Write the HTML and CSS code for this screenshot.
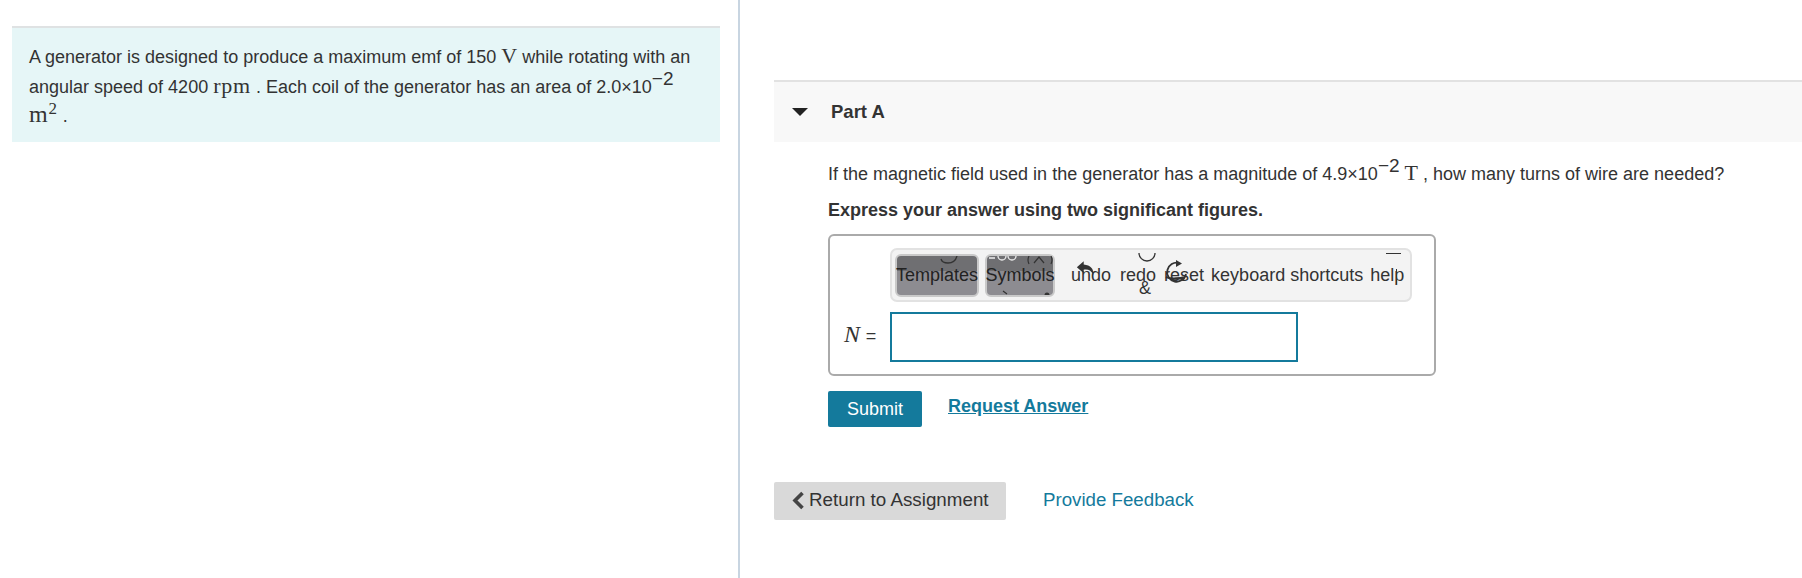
FILE: index.html
```html
<!DOCTYPE html>
<html lang="en">
<head>
<meta charset="utf-8">
<title>Part A</title>
<link rel="stylesheet" href="styles.css">
</head>
<body>
<div class="page">
  <aside class="left">
    <div class="intro">
      <p class="first">A generator is designed to produce a maximum emf of 150 <span class="math v">V</span> while rotating with an</p>
      <p>angular speed of 4200 <span class="math">rpm</span> . Each coil of the generator has an area of 2.0×10<sup class="sup">−2</sup></p>
      <p><span class="math unit">m<sup class="msup">2</sup></span> .</p>
    </div>
  </aside>
  <main class="right">
    <div class="part-head">
      <svg class="caret" width="16" height="8" viewBox="0 0 16 8"><path d="M0 0H16L8 8Z" fill="#222"/></svg>
      <span class="part-title">Part A</span>
    </div>
    <div class="part-body">
      <p class="question">If the magnetic field used in the generator has a magnitude of 4.9×10<sup class="sup">−2</sup> <span class="math v">T</span> , how many turns of wire are needed?</p>
      <p class="instruction">Express your answer using two significant figures.</p>
      <div class="answer-box">
        <div class="toolbar">
          <button class="tb-btn templates">Templates
            <svg class="frag" width="80" height="39" viewBox="0 0 80 39"><path d="M60 0q-2 7-9 7-6 0-7-4" fill="none" stroke="#333" stroke-width="1.300"/></svg>
          </button>
          <button class="tb-btn symbols">Symbols
            <svg class="frag" width="66" height="39" viewBox="0 0 66 39"><path d="M2 2h6M11 0a4 4 0 0 0 8 0M21 0a4 4 0 0 0 8 0" fill="none" stroke="#eee" stroke-width="1.300"/><path d="M42 0q-2 4 0 8M47 7l5-6 5 6M64 0q2 4 0 8M16 35l4 3" fill="none" stroke="#333" stroke-width="1.200"/><circle cx="60" cy="39" r="2.500" fill="#333"/></svg>
          </button>
          <span class="tb-item undo">undo
            <svg class="ico" width="18" height="16" viewBox="0 0 21 18"><path d="M9 1 1 8l8 7v-4c5-1 9 1 11 6 1-7-3-11-11-12z" fill="#333"/></svg>
          </span>
          <span class="tb-item redo">redo
            <svg class="glyph-arc" width="18" height="9" viewBox="0 0 18 9"><path d="M1 0a8 8 0 0 0 16 0" fill="none" stroke="#333" stroke-width="1.300"/></svg>
            <span class="amp">&amp;</span>
          </span>
          <span class="tb-item reset">reset
            <svg class="ico" width="24" height="24" viewBox="0 0 24 24"><path d="M15 3A9.500 9.500 0 1 0 22 14" fill="none" stroke="#333" stroke-width="1.800"/><path d="M12 0l6 3.500-6 3.500z" fill="#333"/><path d="M2 17q5 2 10 1.500 5 0 8-1" fill="none" stroke="#333" stroke-width="2.400"/></svg>
          </span>
          <span class="tb-item keys">keyboard shortcuts</span>
          <span class="tb-item help">help
            <span class="overline"></span>
            <span class="stem"></span>
          </span>
        </div>
        <div class="answer-row">
          <span class="label"><span class="math italic">N</span> =</span>
          <div class="input"></div>
        </div>
      </div>
      <div class="actions">
        <button class="submit">Submit</button>
        <a class="request" href="#">Request Answer</a>
      </div>
    </div>
    <div class="footer">
      <button class="return">
        <svg width="14" height="19" viewBox="0 0 14 19"><path d="M11.500 2 4 9.500l7.500 7.500" fill="none" stroke="#444" stroke-width="3.600"/></svg>
        <span>Return to Assignment</span>
      </button>
      <a class="feedback" href="#">Provide Feedback</a>
    </div>
  </main>
</div>
</body>
</html>
```
FILE: styles.css
```css
* { box-sizing: border-box; }
html, body { margin: 0; padding: 0; }
body {
  font-family: "Liberation Sans", Arial, sans-serif;
  font-size: 18px;
  color: #333;
  background: #fff;
}
p { margin: 0; }
a { text-decoration: none; color: #147a9c; }
button { font-family: inherit; font-size: 18px; }

.page { display: flex; height: 578px; overflow: hidden; }

.left {
  flex: none;
  width: 740px;
  padding: 26px 18px 0 12px;
  border-right: 2px solid #c8d5e1;
}
.intro {
  height: 116px;
  padding: 14px 17px 0;
  background: #e6f6f7;
  border-top: 2px solid #dfe2e3;
}
.intro p { height: 28px; line-height: 28px; white-space: nowrap; }
.intro .first { height: 30px; }

.math { font-family: "Liberation Serif", "DejaVu Serif", serif; font-size: 22px; letter-spacing: 0.8px; }
.math.v { letter-spacing: 0; }
.math.unit { font-size: 24px; }
.math.italic { font-style: italic; }
.sup { font-size: 19px; line-height: 0; vertical-align: 8px; }
.msup { font-size: 17px; line-height: 0; vertical-align: 8px; }

.right { flex: 1; min-width: 0; padding: 80px 0 0 34px; }

.part-head {
  display: flex;
  align-items: center;
  height: 62px;
  padding-left: 18px;
  background: #f8f8f8;
  border-top: 2px solid #e2e2e2;
}
.part-title { margin-left: 23px; font-size: 18.500px; font-weight: bold; color: #333; }

.part-body { padding: 17px 0 0 54px; }
.question { height: 28px; line-height: 28px; white-space: nowrap; }
.instruction { margin-top: 9px; height: 28px; line-height: 28px; font-weight: bold; }

.answer-box {
  width: 608px;
  height: 142px;
  margin-top: 10px;
  padding: 12px 0 0 60px;
  border: 2px solid #aaa;
  border-radius: 6px;
}
.toolbar {
  display: flex;
  align-items: center;
  width: 522px;
  height: 54px;
  padding-left: 3px;
  background: #f3f3f3;
  border: 2px solid #e2e2e2;
  border-radius: 7px;
}
.tb-btn {
  position: relative;
  display: flex;
  justify-content: center;
  align-items: center;
  flex: none;
  height: 43px;
  padding: 0;
  color: #222;
  background: linear-gradient(#6f6f72 0 38%, #8d8c91 38% 100%);
  border: 2px solid #c9c9c9;
  border-radius: 6px;
  white-space: nowrap;
}
.templates { width: 84px; }
.symbols { width: 70px; margin-left: 6px; }
.frag { position: absolute; left: 0; top: 0; }

.tb-item { position: relative; flex: none; white-space: nowrap; color: #333; }
.undo { margin-left: 16px; }
.redo { margin-left: 9px; }
.reset { margin-left: 8px; }
.keys { margin-left: 7px; }
.help { margin-left: 7px; }
.ico { position: absolute; }
.undo .ico { left: 5px; top: -5px; }
.reset .ico { left: 0; top: -5px; }
.glyph-arc { position: absolute; left: 18px; top: -12px; }
.amp { position: absolute; left: 19px; top: 13px; }
.overline { position: absolute; left: 16px; top: -12px; width: 15px; height: 1px; background: #333; }
.stem { position: absolute; left: 26px; top: 4px; width: 1px; height: 15px; background: #333; }

.answer-row { display: flex; align-items: center; margin-top: 10px; margin-left: -46px; }
.label { width: 46px; padding-bottom: 6px; font-size: 18px; white-space: nowrap; }
.label .math { font-size: 24px; }
.input { width: 408px; height: 50px; background: #fff; border: 2px solid #147a9c; }

.actions { display: flex; align-items: center; margin-top: 15px; }
.submit {
  width: 94px;
  height: 36px;
  color: #fff;
  background: #147a9c;
  border: 0;
  border-radius: 2px;
}
.request {
  margin: -5px 0 0 26px;
  font-size: 18px;
  font-weight: bold;
  text-decoration: underline;
}

.footer { display: flex; align-items: center; margin-top: 55px; }
.return {
  display: flex;
  align-items: center;
  gap: 4px;
  width: 232px;
  height: 38px;
  padding: 0 0 2px 17px;
  font-size: 18.800px;
  color: #333;
  background: #d9d9d9;
  border: 0;
  border-radius: 2px;
}
.feedback { margin: -2px 0 0 37px; font-size: 18.700px; }
```
